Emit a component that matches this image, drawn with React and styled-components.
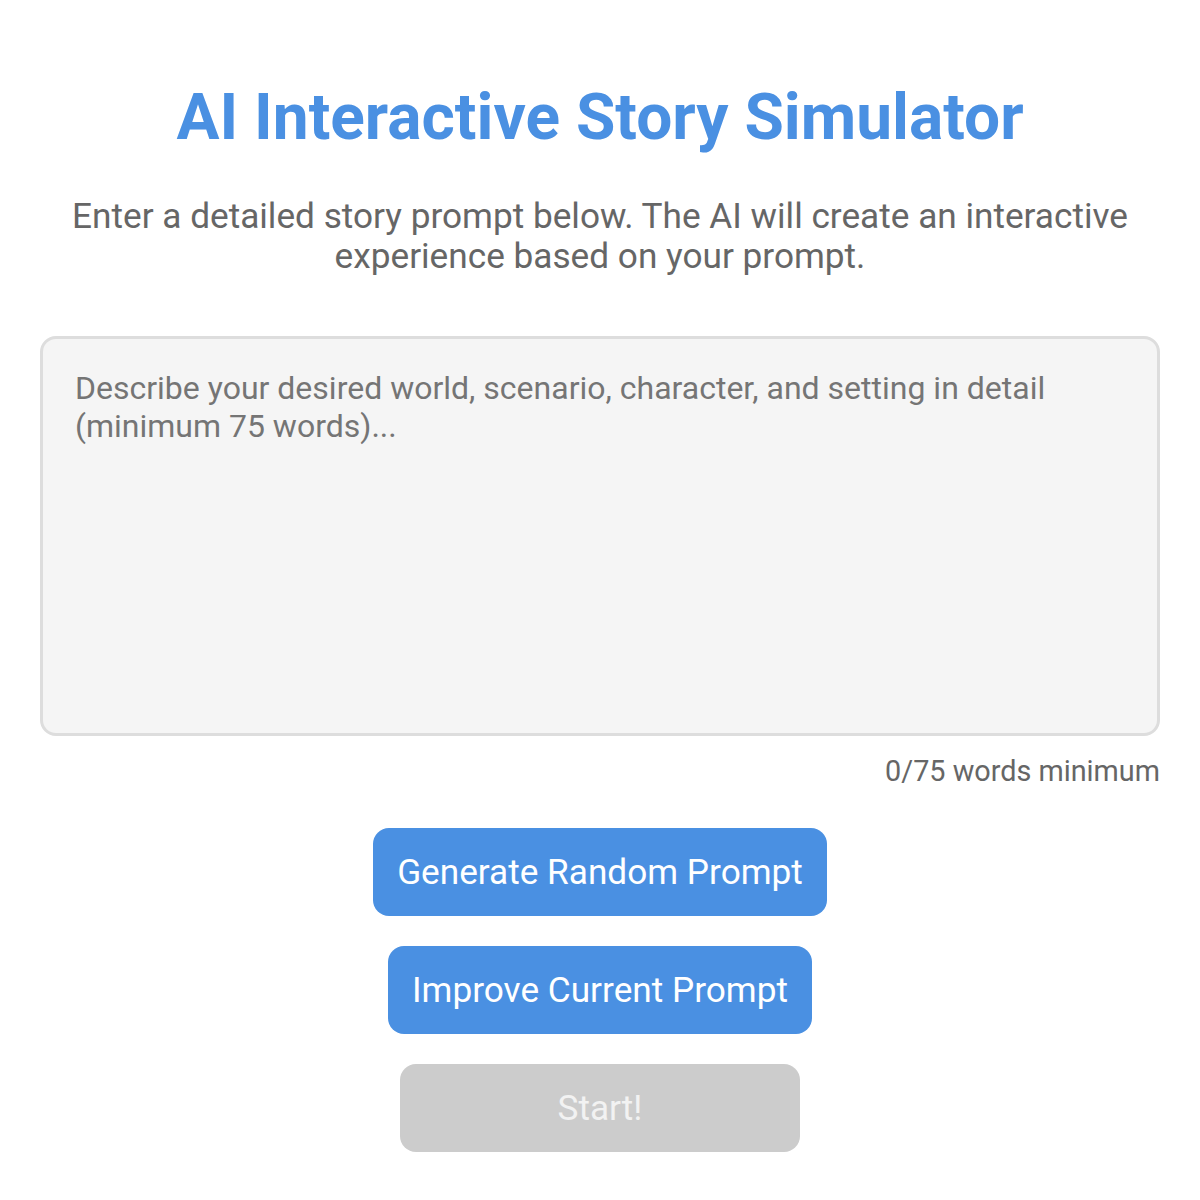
import React from "react";
import styled, { createGlobalStyle } from "styled-components";

const Global = createGlobalStyle`
  html, body { margin: 0; padding: 0; background: #ffffff; }
  body { font-family: Roboto, "Liberation Sans", sans-serif; }
  * { box-sizing: border-box; }
`;

const Page = styled.div`
  width: 1200px;
  padding: 84px 40px 40px;
  display: flex;
  flex-direction: column;
  align-items: center;
`;

const Title = styled.h1`
  margin: 0;
  font-size: 64px;
  line-height: 68px;
  font-weight: 700;
  color: #4a90e2;
  text-align: center;
`;

const Subtitle = styled.p`
  margin: 44px 0 0;
  font-size: 35.2px;
  line-height: 40px;
  color: #666666;
  text-align: center;
`;

const Area = styled.textarea`
  margin-top: 60px;
  width: 100%;
  height: 400px;
  padding: 30px 32px;
  font-family: Roboto, "Liberation Sans", sans-serif;
  font-size: 32px;
  line-height: 38px;
  color: #333;
  background: #f5f5f5;
  border: 3px solid #dddddd;
  border-radius: 16px;
  resize: none;
  outline: none;
  &::placeholder { color: #757575; }
`;

const Counter = styled.div`
  align-self: flex-end;
  margin-top: 18px;
  font-size: 28.8px;
  line-height: 34px;
  color: #666666;
`;

const Buttons = styled.div`
  margin-top: 40px;
  display: flex;
  flex-direction: column;
  align-items: center;
  gap: 30px;
`;

const Button = styled.button`
  height: 88px;
  min-width: ${(p) => (p.$wide ? "400px" : "0")};
  padding: 0 24px;
  border: none;
  border-radius: 16px;
  font-family: Roboto, "Liberation Sans", sans-serif;
  font-size: 35.2px;
  color: ${(p) => (p.$disabled ? "#f2f2f2" : "#ffffff")};
  background: ${(p) => (p.$disabled ? "#cccccc" : "#4a90e2")};
  cursor: ${(p) => (p.$disabled ? "not-allowed" : "pointer")};
`;

export default function App() {
  return (
    <>
      <Global />
      <Page>
        <Title>AI Interactive Story Simulator</Title>
        <Subtitle>
          Enter a detailed story prompt below. The AI will create an interactive
          <br />
          experience based on your prompt.
        </Subtitle>
        <Area placeholder="Describe your desired world, scenario, character, and setting in detail (minimum 75 words)..." />
        <Counter>0/75 words minimum</Counter>
        <Buttons>
          <Button>Generate Random Prompt</Button>
          <Button>Improve Current Prompt</Button>
          <Button $wide $disabled disabled>
            Start!
          </Button>
        </Buttons>
      </Page>
    </>
  );
}
